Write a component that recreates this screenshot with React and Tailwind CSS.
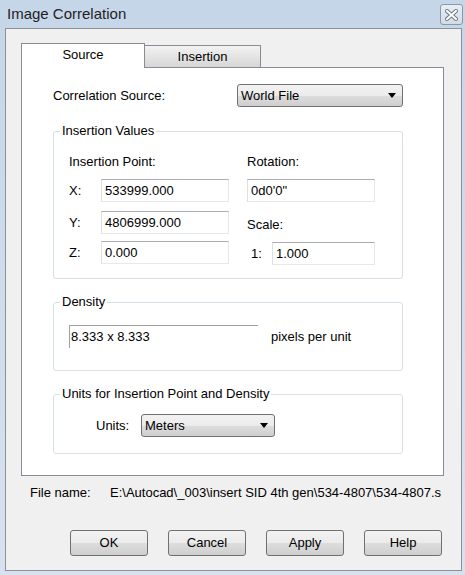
// App.jsx — Image Correlation dialog

const btnGrad =
  "bg-[linear-gradient(#f2f2f2_0%,#ebebeb_50%,#dddddd_50%,#cfcfcf_100%)]";

const Dropdown = ({ value, className }) => {
  return (
    <div
      className={`flex items-center justify-between rounded-[3px] border border-[#707070] pl-[3px] pr-[6px] text-black ${btnGrad} ${className}`}
    >
      <span>{value}</span>
      <svg width="8" height="5" viewBox="0 0 8 5">
        <path d="M0 0 H8 L4 5 Z" fill="#000" />
      </svg>
    </div>
  );
};

const TextBox = ({ value, className }) => {
  return (
    <div
      className={`flex h-[23px] items-center border border-[#abadb3] border-l-[#dbdfe6] border-r-[#e3e9ef] border-b-[#e3e9ef] bg-white pl-[3px] ${className}`}
    >
      {value}
    </div>
  );
};

const Group = ({ title, className, children }) => {
  return (
    <fieldset
      className={`w-[350px] rounded-[3px] border border-[#d5dfe5] ${className}`}
    >
      <legend className="ml-[6px] px-[2px] leading-[16px]">{title}</legend>
      {children}
    </fieldset>
  );
};

const Button = ({ label }) => {
  return (
    <button
      className={`h-[26px] w-[78px] rounded-[3px] border border-[#707070] text-black ${btnGrad}`}
    >
      {label}
    </button>
  );
};

const CloseIcon = () => {
  return (
    <div className="flex h-[21px] w-[23px] items-center justify-center rounded-[3px] border border-[#8b98a8] bg-linear-to-b from-[#e9eef5] to-[#d2dbe6]">
      <svg width="13" height="12" viewBox="0 0 13 12">
        <path
          d="M2 2 L11 10 M11 2 L2 10"
          stroke="#6f7a86"
          strokeWidth="4"
          strokeLinecap="square"
        />
        <path
          d="M2 2 L11 10 M11 2 L2 10"
          stroke="#ffffff"
          strokeWidth="2"
          strokeLinecap="square"
        />
      </svg>
    </div>
  );
};

export default function App() {
  return (
    <div
      className="flex h-[575px] w-[465px] flex-col bg-linear-to-b from-[#c6d6e9] to-[#d6e2ef] text-[13px] leading-[16px] text-black"
      style={{ fontFamily: '"Liberation Sans", Arial, sans-serif' }}
    >
      {/* Title bar */}
      <div className="flex h-[28px] items-start justify-between pl-[7px] pr-[2px]">
        <span className="mt-[5px] text-[15px] leading-[18px] text-[#1e1e1e]">
          Image Correlation
        </span>
        <div className="mt-[4px]">
          <CloseIcon />
        </div>
      </div>

      {/* Client area */}
      <div className="mb-[4px] ml-[5px] mr-[3px] flex flex-1 flex-col border border-[#8d9095] bg-[#f0f0f0] pl-[15px] pt-[14px]">
        {/* Tabs */}
        <div className="flex h-[24px] items-end">
          <div className="relative z-10 -mb-px flex h-[25px] w-[124px] justify-center border border-b-0 border-[#898c95] bg-white pt-[3px]">
            Source
          </div>
          <div className="-ml-px flex h-[22px] w-[117px] justify-center border border-b-0 border-[#898c95] bg-linear-to-b from-[#f3f3f3] to-[#d6d6d6] pt-[3px]">
            Insertion
          </div>
        </div>

        {/* Tab panel */}
        <div className="flex h-[409px] w-[423px] flex-col border border-[#898c95] bg-white pl-[31px] pt-[16px]">
          <div className="flex h-[23px] items-center">
            <span className="w-[184px]">Correlation Source:</span>
            <Dropdown value="World File" className="h-[23px] w-[166px]" />
          </div>

          <Group title="Insertion Values" className="mt-[16px] pb-[13px]">
            <div className="mt-[15px] flex pl-[15px]">
              <div className="flex w-[178px] flex-col">
                <span>Insertion Point:</span>
                <div className="mt-[9px] flex items-center">
                  <span className="w-[32px]">X:</span>
                  <TextBox value="533999.000" className="w-[128px]" />
                </div>
                <div className="mt-[9px] flex items-center">
                  <span className="w-[32px]">Y:</span>
                  <TextBox value="4806999.000" className="w-[128px]" />
                </div>
                <div className="mt-[7px] flex items-center">
                  <span className="w-[32px]">Z:</span>
                  <TextBox value="0.000" className="w-[128px]" />
                </div>
              </div>
              <div className="flex flex-col">
                <span>Rotation:</span>
                <TextBox value={"0d0'0\""} className="mt-[9px] w-[128px]" />
                <span className="mt-[15px]">Scale:</span>
                <div className="mt-[9px] flex items-center">
                  <span className="w-[25px] pl-[4px]">1:</span>
                  <TextBox value="1.000" className="w-[103px]" />
                </div>
              </div>
            </div>
          </Group>

          <Group title="Density" className="mt-[15px] pb-[22px]">
            <div className="mt-[15px] flex items-center pl-[15px]">
              <div className="flex h-[23px] w-[189px] items-center border-l border-t border-[#a0a0a0] pl-[1px]">
                8.333 x 8.333
              </div>
              <span className="ml-[13px]">pixels per unit</span>
            </div>
          </Group>

          <Group
            title="Units for Insertion Point and Density"
            className="mt-[15px] pb-[16px]"
          >
            <div className="mt-[12px] flex items-center pl-[42px]">
              <span className="w-[45px]">Units:</span>
              <Dropdown value="Meters" className="h-[23px] w-[134px]" />
            </div>
          </Group>
        </div>

        {/* File name */}
        <div className="ml-[9px] mt-[9px] flex">
          <span className="w-[80px]">File name:</span>
          <span className="w-[333px] overflow-hidden whitespace-nowrap">
            E:\Autocad\_003\insert SID 4th gen\534-4807\534-4807.s
          </span>
        </div>

        {/* Buttons */}
        <div className="ml-[49px] mt-[29px] flex gap-[20px]">
          <Button label="OK" />
          <Button label="Cancel" />
          <Button label="Apply" />
          <Button label="Help" />
        </div>
      </div>
    </div>
  );
}
